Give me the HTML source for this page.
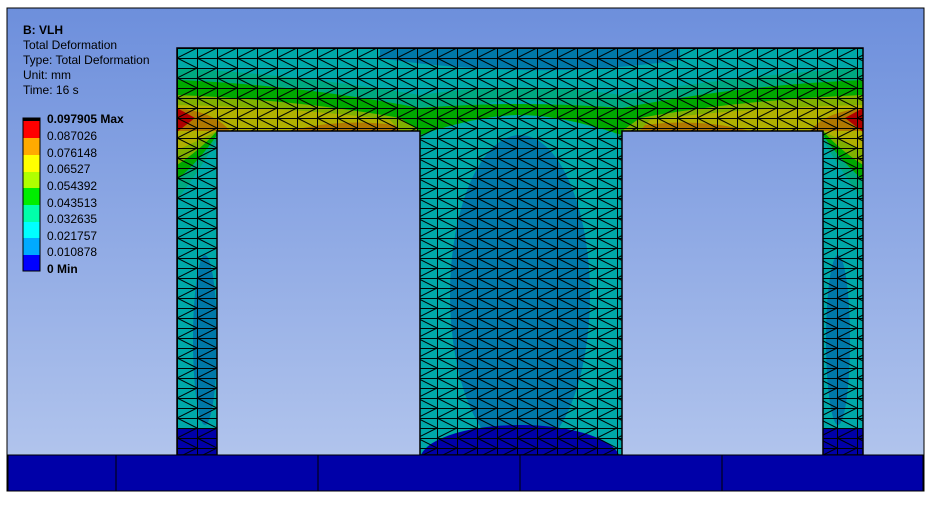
<!DOCTYPE html>
<html><head><meta charset="utf-8"><style>
html,body{margin:0;padding:0;background:#fff;width:931px;height:502px;overflow:hidden}
.wrap{position:absolute;left:0;top:0;width:931px;height:502px}
.lg{position:absolute;font-family:"Liberation Sans",sans-serif;font-size:12px;color:#000;line-height:15px}
.lab{position:absolute;left:47px;font-family:"Liberation Sans",sans-serif;font-size:12px;color:#000}
</style></head><body><div class="wrap">
<svg width="931" height="502" viewBox="0 0 931 502" xmlns="http://www.w3.org/2000/svg">
<defs>
<linearGradient id="bg" x1="0" y1="0" x2="0" y2="1">
<stop offset="0" stop-color="#6d8fdc"/><stop offset="1" stop-color="#b6c8ee"/>
</linearGradient>
<pattern id="mesh" x="177" y="48" width="40" height="20" patternUnits="userSpaceOnUse">
<path d="M0 0.5H40M0 10.5H40M0.5 0V20M20.5 0V20M0 10L20 0M20 10L40 0M0 10L20 20M20 10L40 20" stroke="#000" stroke-width="1" fill="none"/>
</pattern>
<clipPath id="fr"><path d="M177 48H863V455H823V131H622V455H420V131H217V455H177Z"/></clipPath>
</defs>
<rect x="7" y="8" width="917" height="483" fill="url(#bg)" stroke="#000" stroke-width="1"/>
<g clip-path="url(#fr)">
<rect x="170" y="40" width="700" height="420" fill="#00a8a8"/>
<path d="M380 48H680V60Q600 72 520 70Q440 68 380 58Z" fill="#0078a8"/>
<ellipse cx="520" cy="295" rx="70" ry="160" fill="#0078a8"/>
<ellipse cx="520" cy="460" rx="100" ry="35" fill="#0000a8"/>
<ellipse cx="205" cy="340" rx="12" ry="85" fill="#0078a8"/>
<ellipse cx="838" cy="340" rx="12" ry="85" fill="#0078a8"/>
<rect x="170" y="428" width="60" height="30" fill="#0000a8"/>
<rect x="815" y="428" width="60" height="30" fill="#0000a8"/>
<path d="M177 68Q300 75 420 95Q520 80 622 95Q740 75 863 68V200Q840 170 823 140H622Q580 100 520 100Q460 100 420 140H217Q200 170 177 200Z" fill="#00a880"/>
<path d="M177 80Q300 85 420 108Q520 100 622 108Q740 85 863 80V180Q840 160 823 135H622Q560 115 520 115Q480 115 420 135H217Q200 160 177 180Z" fill="#00a800"/>
<path d="M177 95Q300 100 400 118L420 131H217Q200 150 177 165ZM863 95Q740 100 640 118L622 131H823Q840 150 863 165Z" fill="#80b000"/>
<path d="M177 105Q300 108 390 120L400 131H217Q200 140 177 150ZM863 105Q740 108 650 120L640 131H823Q840 140 863 150Z" fill="#b0b000"/>
<path d="M177 108Q215 112 230 131H177ZM290 131Q340 118 395 125L400 131ZM863 108Q825 112 810 131H863ZM750 131Q700 118 645 125L640 131Z" fill="#b07800"/>
<path d="M177 108L195 118L177 132ZM863 108L845 118L863 132Z" fill="#b00000"/>
<rect x="0" y="0" width="931" height="502" fill="url(#mesh)"/>
</g>
<path d="M177 48H863V455H823V131H622V455H420V131H217V455H177Z" fill="none" stroke="#000" stroke-width="1.5"/>
<rect x="8" y="455" width="915" height="36" fill="#0000a8" stroke="#000" stroke-width="1"/>
<path d="M116 455V491M318 455V491M520 455V491M722 455V491" stroke="#000" stroke-width="1"/>
<rect x="23" y="118" width="17" height="3" fill="#000"/>
<rect x="23" y="121" width="17" height="17" fill="#ff0000"/>
<rect x="23" y="138" width="17" height="17" fill="#ffaa00"/>
<rect x="23" y="155" width="17" height="17" fill="#ffff00"/>
<rect x="23" y="172" width="17" height="16" fill="#b0ff00"/>
<rect x="23" y="188" width="17" height="17" fill="#00ee00"/>
<rect x="23" y="205" width="17" height="17" fill="#00ffaa"/>
<rect x="23" y="222" width="17" height="16" fill="#00ffff"/>
<rect x="23" y="238" width="17" height="17" fill="#00aaff"/>
<rect x="23" y="255" width="17" height="16" fill="#0000ff"/>
<rect x="23" y="118" width="17" height="153" fill="none" stroke="#000" stroke-width="1"/>
</svg>
<div class="lg" style="left:23px;top:23px"><b>B: VLH</b><br>Total Deformation<br>Type: Total Deformation<br>Unit: mm<br>Time: 16 s</div>
<div class="lab" style="top:112px"><b>0.097905 Max</b></div>
<div class="lab" style="top:129px">0.087026</div>
<div class="lab" style="top:146px">0.076148</div>
<div class="lab" style="top:162px">0.06527</div>
<div class="lab" style="top:179px">0.054392</div>
<div class="lab" style="top:196px">0.043513</div>
<div class="lab" style="top:212px">0.032635</div>
<div class="lab" style="top:229px">0.021757</div>
<div class="lab" style="top:245px">0.010878</div>
<div class="lab" style="top:262px"><b>0 Min</b></div>
</div></body></html>
